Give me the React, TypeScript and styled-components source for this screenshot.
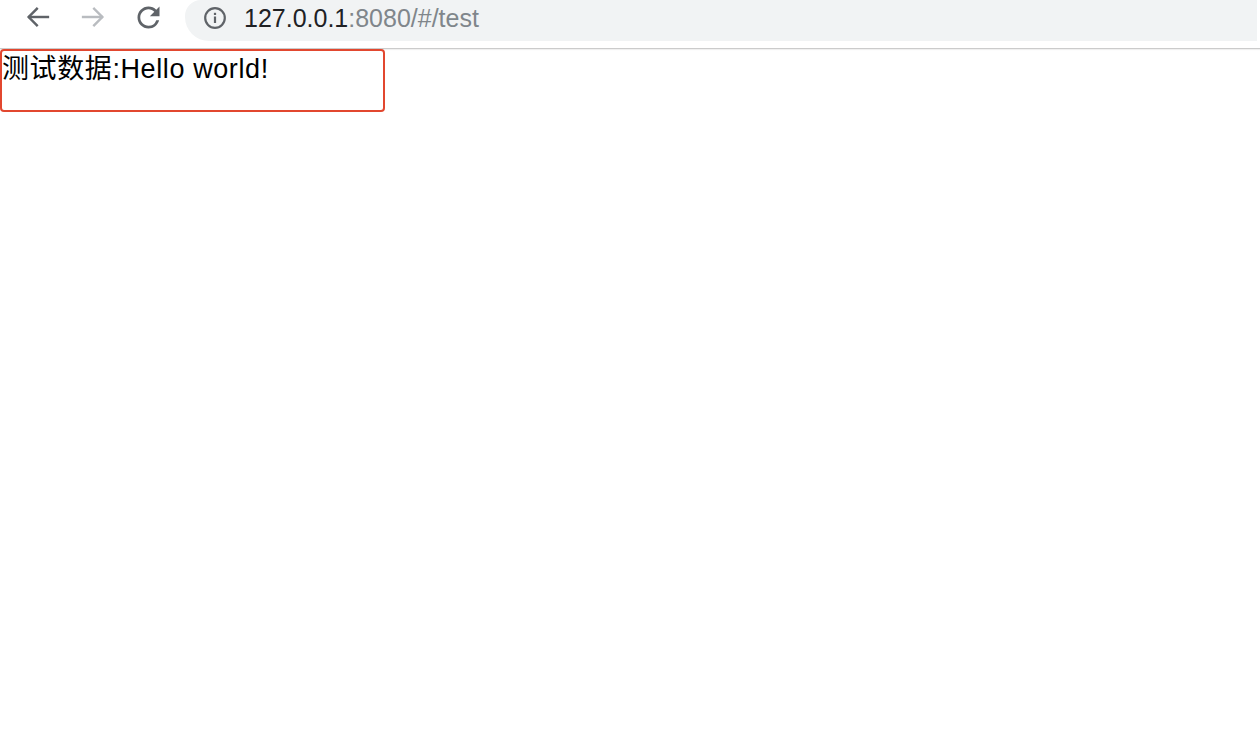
import styled, { createGlobalStyle } from "styled-components";

const Global = createGlobalStyle`
    html, body {
        margin: 0;
        padding: 0;
        background: #ffffff;
    }
    body {
        font-family: "Liberation Sans", Arial, "Noto Sans CJK SC", sans-serif;
    }
`

export default function App() {
    return (
        <Page>
            <Global />
            <Toolbar>
                <NavButton>
                    <svg width="28" height="28" viewBox="0 0 24 24" fill="none" stroke="#5f6368" strokeWidth="2.1" strokeLinecap="square">
                        <path d="M20.5 12H4.5" />
                        <path d="M11 5L4 12L11 19" />
                    </svg>
                </NavButton>
                <NavButton>
                    <svg width="28" height="28" viewBox="0 0 24 24" fill="none" stroke="#b9bcc0" strokeWidth="2.1" strokeLinecap="square">
                        <path d="M3.5 12H19.5" />
                        <path d="M13 5L20 12L13 19" />
                    </svg>
                </NavButton>
                <NavButton>
                    <svg width="33" height="33" viewBox="0 0 24 24">
                        <path fill="#5f6368" d="M17.65 6.35A7.958 7.958 0 0 0 12 4c-4.42 0-7.99 3.58-7.99 8s3.57 8 7.99 8c3.73 0 6.84-2.55 7.73-6h-2.08A5.99 5.99 0 0 1 12 18c-3.31 0-6-2.69-6-6s2.69-6 6-6c1.66 0 3.14.69 4.22 1.78L13 11h7V4l-2.35 2.35z" />
                    </svg>
                </NavButton>
                <AddressBar>
                    <InfoIcon>
                        <svg width="24" height="24" viewBox="0 0 24 24" fill="none">
                            <circle cx="12" cy="12" r="9.8" stroke="#5f6368" strokeWidth="2.2" />
                            <rect x="10.9" y="10.5" width="2.2" height="6.5" fill="#5f6368" />
                            <rect x="10.9" y="6.8" width="2.2" height="2.2" fill="#5f6368" />
                        </svg>
                    </InfoIcon>
                    <Url>
                        <Host>127.0.0.1</Host>
                        <Rest>:8080/#/test</Rest>
                    </Url>
                </AddressBar>
            </Toolbar>
            <TestBox>测试数据:Hello world!</TestBox>
        </Page>
    )
}

const Page = styled.div`
    width: 1260px;
    height: 750px;
    background: #ffffff;
    overflow: hidden;
`

const Toolbar = styled.div`
    height: 48px;
    display: flex;
    align-items: flex-start;
    padding-left: 21px;
    border-bottom: 1px solid #cbcbcb;
    box-shadow: 0 1px 1px rgba(0, 0, 0, 0.06);
`

const NavButton = styled.div`
    width: 34px;
    height: 34px;
    margin-right: 21px;
    display: flex;
    align-items: center;
    justify-content: center;
`

const AddressBar = styled.div`
    flex: 1;
    height: 41px;
    margin-left: -1px;
    margin-right: 3px;
    background: #f1f3f4;
    border-radius: 16px 0 0 24px;
    display: flex;
    align-items: center;
    padding-left: 18px;
    padding-top: 2px;
    box-sizing: border-box;
`

const InfoIcon = styled.div`
    width: 24px;
    height: 24px;
    margin-top: -8px;
    display: flex;
    align-items: center;
    justify-content: center;
`

const Url = styled.div`
    margin-left: 17px;
    margin-top: -8px;
    font-family: "Liberation Sans", Arial, sans-serif;
    font-size: 25px;
    line-height: 30px;
    white-space: nowrap;
`

const Host = styled.span`
    color: #202124;
`

const Rest = styled.span`
    color: #80868b;
`

const TestBox = styled.div`
    width: 385px;
    height: 63px;
    box-sizing: border-box;
    border: 2.5px solid #e2472f;
    border-radius: 4px;
    font-family: "Liberation Sans", Arial, "Noto Sans CJK SC", sans-serif;
    font-size: 27px;
    line-height: 36px;
    letter-spacing: 0.6px;
    color: #000000;
    white-space: nowrap;
`
